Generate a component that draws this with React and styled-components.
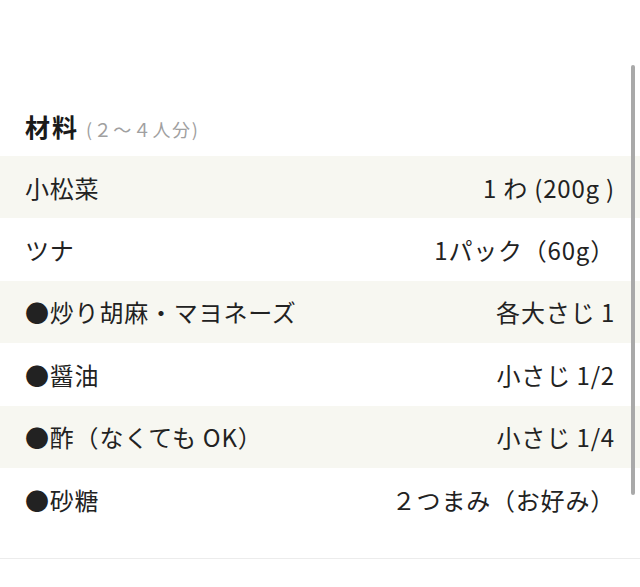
import React from 'react';
import styled, { createGlobalStyle } from 'styled-components';

const GlobalStyle = createGlobalStyle`
  html, body {
    margin: 0;
    padding: 0;
    background: #ffffff;
  }
  body {
    font-family: "Noto Sans CJK JP", "Noto Sans", sans-serif;
    color: #1e1e1e;
  }
`;

const ingredients = [
  { name: '小松菜', amount: '1 わ (200g )' },
  { name: 'ツナ', amount: '1パック（60g）' },
  { name: '●炒り胡麻・マヨネーズ', amount: '各大さじ\u20091' },
  { name: '●醤油', amount: '小さじ\u20091/2' },
  { name: '●酢（なくても OK）', amount: '小さじ\u20091/4' },
  { name: '●砂糖', amount: '２つまみ（お好み）' },
];

export default function App() {
  return (
    <Page>
      <GlobalStyle />
      <Section>
        <Header>
          <Title>材料</Title>
          <Serving>(２〜４人分)</Serving>
        </Header>
        <List>
          {ingredients.map((item, i) => (
            <Row key={item.name} $shaded={i % 2 === 0}>
              <Name>{item.name}</Name>
              <Amount>{item.amount}</Amount>
            </Row>
          ))}
        </List>
        <Spacer />
      </Section>
      <ScrollBar />
    </Page>
  );
}

const Page = styled.div`
  position: relative;
  width: 640px;
  height: 587px;
  overflow: hidden;
  background: #fff;
`;

const Section = styled.div`
  padding-top: 108px;
  border-bottom: 1px solid #ececec;
`;

const Header = styled.div`
  display: flex;
  align-items: baseline;
  gap: 7px;
  padding: 0 25px;
  height: 48px;
`;

const Title = styled.h2`
  margin: 0;
  font-size: 25px;
  font-weight: 700;
  color: #1a1a1a;
  letter-spacing: 2px;
`;

const Serving = styled.span`
  font-size: 18px;
  color: #a0a0a0;
  letter-spacing: 1.6px;
`;

const List = styled.div`
  display: flex;
  flex-direction: column;
`;

const Row = styled.div`
  display: flex;
  align-items: center;
  justify-content: space-between;
  height: 62.4px;
  padding: 0 25px 0 25px;
  background: ${(p) => (p.$shaded ? '#f7f7f1' : '#ffffff')};
  font-size: 24px;
  color: #222;
`;

const Name = styled.span`
  letter-spacing: 0.8px;
`;

const Amount = styled.span`
  letter-spacing: 0.8px;
`;

const Spacer = styled.div`
  height: 28px;
`;

const ScrollBar = styled.div`
  position: absolute;
  top: 65px;
  right: 5px;
  width: 4px;
  height: 430px;
  border-radius: 2px;
  background: #a9a9a9;
`;
